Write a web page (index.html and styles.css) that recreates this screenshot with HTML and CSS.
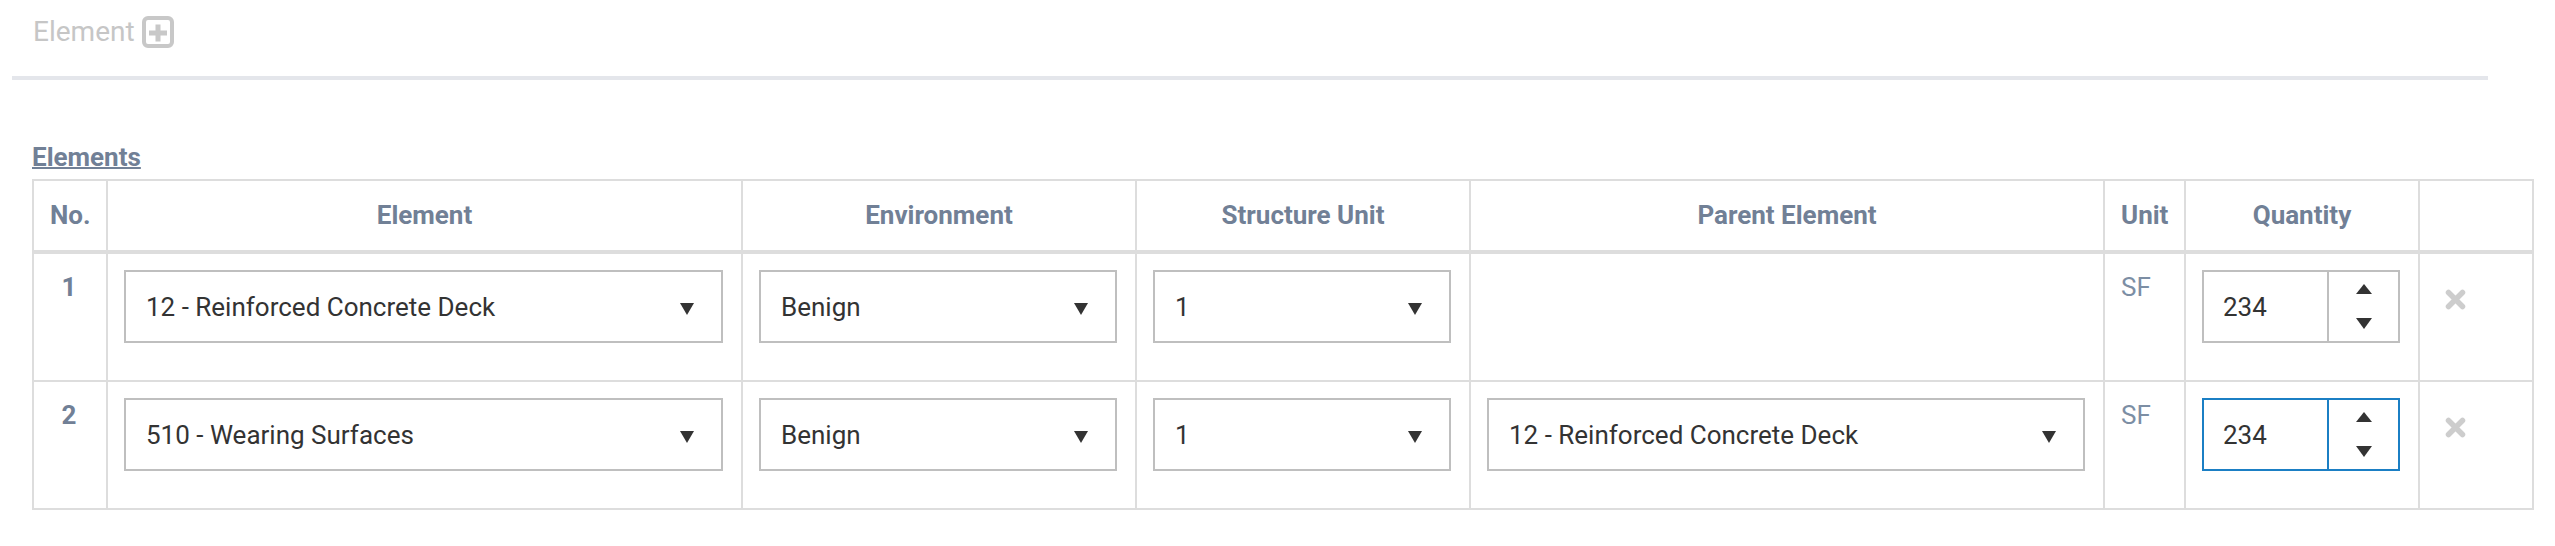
FILE: index.html
```html
<!DOCTYPE html>
<html lang="en">
<head>
  <meta charset="utf-8">
  <meta name="viewport" content="width=device-width, initial-scale=1.0">
  <title>Elements</title>
  <link rel="stylesheet" href="styles.css">
</head>

<body>

  <div class="section-head">
    <span class="section-title">Element</span>
    <svg class="add-icon" width="32" height="32" viewBox="0 0 32 32" aria-hidden="true">
      <rect x="2" y="2" width="28" height="28" rx="4" ry="4" fill="none" stroke="#c8c8c8" stroke-width="4"/>
      <path d="M16 8.5v17M7 17h18" stroke="#c8c8c8" stroke-width="5" fill="none"/>
    </svg>
  </div>
  <hr class="divider">

  <div class="elements">
    <a class="elements-link" href="#">Elements</a>

    <table class="element-table">
      <colgroup>
        <col class="col-no">
        <col class="col-element">
        <col class="col-env">
        <col class="col-unit-struct">
        <col class="col-parent">
        <col class="col-unit">
        <col class="col-qty">
        <col>
      </colgroup>
      <thead>
        <tr>
          <th>No.</th>
          <th>Element</th>
          <th>Environment</th>
          <th>Structure Unit</th>
          <th>Parent Element</th>
          <th>Unit</th>
          <th>Quantity</th>
          <th></th>
        </tr>
      </thead>
      <tbody>
        <tr>
          <td class="num">1</td>
          <td>
            <div class="select-wrap">
              <select><option>12 - Reinforced Concrete Deck</option></select>
            </div>
          </td>
          <td>
            <div class="select-wrap">
              <select><option>Benign</option></select>
            </div>
          </td>
          <td>
            <div class="select-wrap">
              <select><option>1</option></select>
            </div>
          </td>
          <td></td>
          <td class="unit">SF</td>
          <td>
            <div class="qty">
              <input type="text" value="234">
              <div class="spin">
                <span class="spin-btn"><i class="arrow-up"></i></span>
                <span class="spin-btn"><i class="arrow-down"></i></span>
              </div>
            </div>
          </td>
          <td class="action">
            <svg class="remove" width="21" height="21" viewBox="0 0 21 21" aria-hidden="true">
              <path d="M3.5 3.5L17.5 17.5M17.5 3.5L3.5 17.5" stroke="#cdcdcd" stroke-width="5.5" stroke-linecap="round"/>
            </svg>
          </td>
        </tr>
        <tr>
          <td class="num">2</td>
          <td>
            <div class="select-wrap">
              <select><option>510 - Wearing Surfaces</option></select>
            </div>
          </td>
          <td>
            <div class="select-wrap">
              <select><option>Benign</option></select>
            </div>
          </td>
          <td>
            <div class="select-wrap">
              <select><option>1</option></select>
            </div>
          </td>
          <td>
            <div class="select-wrap">
              <select><option>12 - Reinforced Concrete Deck</option></select>
            </div>
          </td>
          <td class="unit">SF</td>
          <td>
            <div class="qty is-focused">
              <input type="text" value="234">
              <div class="spin">
                <span class="spin-btn"><i class="arrow-up"></i></span>
                <span class="spin-btn"><i class="arrow-down"></i></span>
              </div>
            </div>
          </td>
          <td class="action">
            <svg class="remove" width="21" height="21" viewBox="0 0 21 21" aria-hidden="true">
              <path d="M3.5 3.5L17.5 17.5M17.5 3.5L3.5 17.5" stroke="#cdcdcd" stroke-width="5.5" stroke-linecap="round"/>
            </svg>
          </td>
        </tr>
      </tbody>
    </table>
  </div>
</body>
</html>
```

FILE: styles.css
```css
body {
  margin: 0;
  font-family: Roboto, "Liberation Sans", Arial, sans-serif;
  color: #333;
  background-color: #fff;
}

.section-head {
  display: flex;
  align-items: center;
  gap: 7px;
  height: 32px;
  padding: 16px 0 0 33px;
}

.section-title {
  font-size: 28px;
  line-height: 32px;
  color: #c6c6c6;
}

.add-icon {
  display: block;
}

.divider {
  height: 4px;
  margin: 28px 67px 0 12px;
  border: 0;
  background-color: #e4e6eb;
}

.elements {
  margin-top: 62px;
  padding: 0 21px 0 32px;
}

.elements-link {
  display: block;
  width: max-content;
  margin-bottom: 6px;
  font-size: 26px;
  line-height: 31px;
  font-weight: 700;
  color: #718096;
  text-decoration: underline;
  text-decoration-thickness: 2px;
}

.element-table {
  width: 100%;
  table-layout: fixed;
  border-collapse: collapse;
  border: 2px solid #dddddd;
}

.col-no { width: 74px; }
.col-element { width: 635px; }
.col-env { width: 394px; }
.col-unit-struct { width: 334px; }
.col-parent { width: 634px; }
.col-unit { width: 81px; }
.col-qty { width: 234px; }

.element-table th,
.element-table td {
  border: 2px solid #dddddd;
  font-size: 26px;
  line-height: 31px;
}

.element-table th {
  padding: 19px 16px;
  font-weight: 700;
  color: #718096;
  text-align: center;
  border-bottom-width: 4px;
}

.element-table td {
  vertical-align: top;
  padding: 16px 18px 37px 16px;
}

.element-table td.num {
  padding-top: 18px;
  text-align: center;
  font-weight: 700;
  color: #718096;
}

.element-table td.unit {
  padding-top: 18px;
  color: #7c8ea4;
}

.element-table td.action {
  padding: 35px 0 0 25px;
}

.remove {
  display: block;
}

.select-wrap {
  position: relative;
}

.select-wrap select {
  display: block;
  width: 100%;
  height: 73px;
  padding: 0 60px 0 20px;
  border: 2px solid #bfbfbf;
  border-radius: 0;
  background-color: #fff;
  font-family: inherit;
  font-size: 26px;
  color: #333;
  appearance: none;
  -webkit-appearance: none;
}

/* dropdown caret */
.select-wrap::after {
  content: "";
  position: absolute;
  right: 29px;
  top: 50%;
  margin-top: -4px;
  border-left: 7.5px solid transparent;
  border-right: 7.5px solid transparent;
  border-top: 12px solid #333;
  pointer-events: none;
}

.qty {
  display: flex;
  height: 73px;
  box-sizing: border-box;
  border: 2px solid #bfbfbf;
  background-color: #fff;
}

.qty input {
  flex: 1;
  min-width: 0;
  padding: 0 0 0 19px;
  border: 0;
  outline: none;
  font-family: inherit;
  font-size: 26px;
  color: #333;
  background: transparent;
}

.qty .spin {
  display: flex;
  flex-direction: column;
  width: 71px;
  box-sizing: border-box;
  border-left: 2px solid #bfbfbf;
}

.spin-btn {
  flex: 1;
  display: flex;
  align-items: center;
  justify-content: center;
}

.arrow-up,
.arrow-down {
  display: block;
  border-left: 8px solid transparent;
  border-right: 8px solid transparent;
}

.arrow-up {
  border-bottom: 10px solid #333;
}

.arrow-down {
  border-top: 11px solid #333;
}

.qty.is-focused,
.qty.is-focused .spin {
  border-color: #1b7fc4;
}
```
